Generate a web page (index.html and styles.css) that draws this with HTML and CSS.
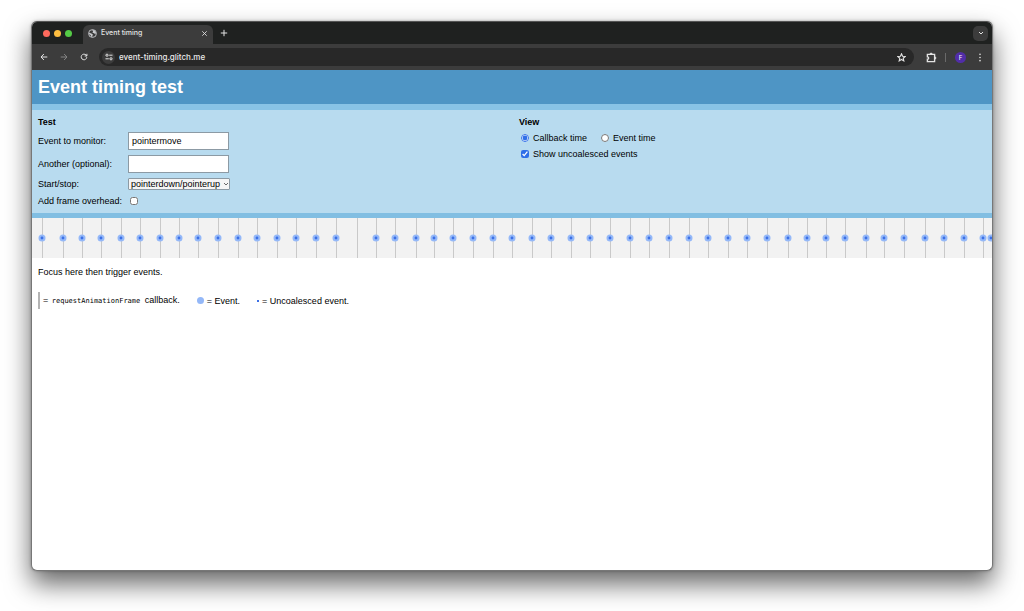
FILE: index.html
```html
<!DOCTYPE html>
<html lang="en">
<head>
<meta charset="utf-8">
<title>Event timing</title>
<link rel="stylesheet" href="styles.css">
</head>
<body>
<div class="window">
  <div class="tabstrip">
    <div class="lights"><span class="light red"></span><span class="light yellow"></span><span class="light green"></span></div>
    <div class="tab">
      <svg class="globe" viewBox="0 0 16 16" aria-hidden="true"><circle cx="8" cy="8" r="7" fill="#3c3c3c" stroke="#c8cacd" stroke-width="1.6"/><path d="M1.500 6.500 5 7.500 8.500 9.500 7.500 14.500 5 13 5 11 2 9ZM7 1.500 12 2.500 14.500 7 12.500 9.500 11 7.500 8 6.500 9 4Z" fill="#c8cacd"/></svg>
      <span class="tab-title">Event timing</span>
      <button class="icon-btn close" aria-label="Close tab"><svg viewBox="0 0 8 8"><path d="M1.500 1.500l5 5M6.500 1.500l-5 5"/></svg></button>
    </div>
    <button class="icon-btn new-tab" aria-label="New tab"><svg viewBox="0 0 8 8"><path d="M4 .8v6.400M.8 4h6.400"/></svg></button>
    <button class="icon-btn tab-search" aria-label="Search tabs"><svg viewBox="0 0 8 8"><path d="M2 3l2 2 2-2"/></svg></button>
  </div>
  <div class="toolbar">
    <button class="icon-btn" aria-label="Back"><svg viewBox="0 0 8 8"><path d="M7.300 4H1M3.900 1L1 4l2.900 3"/></svg></button>
    <button class="icon-btn dim" aria-label="Forward"><svg viewBox="0 0 8 8"><path d="M.7 4H7M4.100 1L7 4 4.100 7"/></svg></button>
    <button class="icon-btn" aria-label="Reload"><svg viewBox="0 0 8 8"><path d="M6.800 4.200A2.800 2.800 0 1 1 6 2L6.800 2.900M6.900.8V3H4.700"/></svg></button>
    <div class="address">
      <button class="site-info" aria-label="Site information"><svg viewBox="0 0 8 8"><path d="M4.200 2.200H7.500M.5 5.800H3.800"/><circle cx="2" cy="2.200" r="1.100"/><circle cx="6" cy="5.800" r="1.100"/></svg></button>
      <input class="url" type="text" aria-label="Address" value="event-timing.glitch.me">
      <button class="icon-btn star" aria-label="Bookmark"><svg viewBox="0 0 16 16"><path d="M8 1.500l1.900 4.300 4.700.5-3.500 3.100 1 4.600L8 11.600 3.900 14l1-4.600L1.400 6.300l4.700-.5Z"/></svg></button>
    </div>
    <button class="icon-btn puzzle" aria-label="Extensions"><svg viewBox="0 0 16 16"><path d="M2 3.500H12.500V14H2V10.500C4.500 10.500 4.500 7 2 7Z"/><path class="knob" d="M5.500 3.500a1.900 1.900 0 0 1 3.800 0ZM12.500 6.800a1.900 1.900 0 0 1 0 3.800Z"/></svg></button>
    <span class="divider"></span>
    <button class="avatar" aria-label="Profile">F</button>
    <button class="icon-btn menu" aria-label="Menu"><svg viewBox="0 0 8 10"><circle cx="4" cy="1.500" r=".9"/><circle cx="4" cy="5" r=".9"/><circle cx="4" cy="8.500" r=".9"/></svg></button>
  </div>
  <main class="page">
    <header class="header"><h1>Event timing test</h1></header>
    <form class="panel">
      <section>
        <h2>Test</h2>
        <div class="fields">
          <label for="ev1">Event to monitor:</label><input class="text" id="ev1" type="text" value="pointermove">
          <label for="ev2">Another (optional):</label><input class="text" id="ev2" type="text">
          <label for="startstop">Start/stop:</label>
          <div class="select-wrap">
            <select id="startstop"><option>pointerdown/pointerup</option></select>
            <svg class="chevron" viewBox="0 0 6 6" aria-hidden="true"><path d="M1 2l2 2 2-2"/></svg>
          </div>
          <label for="overhead">Add frame overhead:</label><input class="check overhead" id="overhead" type="checkbox">
        </div>
      </section>
      <section>
        <h2>View</h2>
        <div class="options">
          <label><input class="radio" type="radio" name="time" checked>Callback time</label>
          <label><input class="radio" type="radio" name="time">Event time</label>
        </div>
        <div class="options">
          <label><input class="check" type="checkbox" checked>Show uncoalesced events</label>
        </div>
      </section>
    </form>
    <svg class="timeline" id="timeline" role="img" aria-label="Event timeline"></svg>
    <div class="notes" tabindex="0">
      <p>Focus here then trigger events.</p>
      <ul class="legend">
        <li><span class="key-frame"></span><span>= <code>requestAnimationFrame</code> callback.</span></li>
        <li><span class="key-event"></span><span>= Event.</span></li>
        <li><span class="key-raw"></span><span>= Uncoalesced event.</span></li>
      </ul>
    </div>
  </main>
</div>
<script src="timeline.js"></script>
</body>
</html>
```
FILE: styles.css
```css
* { box-sizing: border-box; }
body {
  margin: 0;
  padding: 21px 31px 40px;
  min-height: 100vh;
  display: flex;
  background: #fff;
  color: #000;
  font: 9px/12px "Liberation Sans", Arial, sans-serif;
}
button, input, select { margin: 0; font: inherit; color: inherit; }
button { border: 0; padding: 0; background: none; }
h1, h2, p, ul { margin: 0; padding: 0; }

.window {
  flex: 1;
  min-width: 0;
  display: flex;
  flex-direction: column;
  border: 1px solid #777;
  border-top-color: #555;
  border-radius: 6px;
  overflow: hidden;
  background: #fff;
  box-shadow: 0 13px 26px rgba(0, 0, 0, .6), 0 0 3px rgba(0, 0, 0, .3);
}

.tabstrip { display: flex; align-items: center; height: 22px; background: #1f2120; }
.lights { display: flex; gap: 4px; padding: 0 11px 0 11px; }
.light { width: 7px; height: 7px; border-radius: 50%; }
.red { background: #fe6a5d; }
.yellow { background: #febe40; }
.green { background: #55cb46; }
.tab {
  align-self: flex-end;
  display: flex;
  align-items: center;
  gap: 4px;
  width: 130px;
  height: 19px;
  padding: 0 5px 3px;
  border-radius: 6px 6px 0 0;
  background: #3c3c3c;
  color: #e3e3e3;
  font: 500 7px/10px Inter, sans-serif;
}
.tab-title { flex: 1; }
.globe { width: 9px; height: 9px; }
.icon-btn { display: flex; align-items: center; justify-content: center; }
.icon-btn svg { width: 8px; height: 8px; fill: none; stroke: #e3e3e3; stroke-width: 1; }
.close { width: 8px; }
.close svg { width: 7px; height: 7px; }
.new-tab { margin-left: 7px; }
.tab-search { width: 15px; height: 15px; margin: 0 4px 0 auto; border-radius: 5px; background: #3c3c3c; }

.toolbar { display: flex; align-items: center; gap: 12px; height: 26px; padding: 0 8px; background: #3c3c3c; }
.dim svg { stroke: #858585; }
.address {
  flex: 1;
  display: flex;
  align-items: center;
  height: 18px;
  margin: 0 0 0 -1px;
  padding: 0 8px 0 3px;
  border-radius: 9px;
  background: #282828;
}
.site-info { display: flex; align-items: center; justify-content: center; width: 13px; height: 13px; border-radius: 50%; background: #3c3c3c; }
.site-info svg { width: 8px; height: 8px; fill: none; stroke: #e3e3e3; stroke-width: 1; }
.url { flex: 1; min-width: 0; border: 0; padding: 0 4px; background: none; color: #e9e9e9; font: 500 8px/12px Inter, sans-serif; }
.star svg { width: 9px; height: 9px; stroke-width: 2; }
.puzzle svg { width: 11px; height: 11px; stroke-width: 2; }
.puzzle .knob { fill: #e3e3e3; stroke-width: 1; }
.divider { width: 1px; height: 9px; background: #6a6a6a; margin-left: -4px; }
.avatar { width: 11px; height: 11px; margin-left: -3px; border-radius: 50%; background: #512da8; color: #fff; font: 6px/11px Inter, sans-serif; text-align: center; }
.menu { margin-left: -2px; }
.menu svg { width: 8px; height: 9px; fill: #e3e3e3; stroke: none; }

.header { height: 40px; padding: 5px 6px; border-bottom: 6px solid #88c3e6; background: #4e95c5; }
h1 { color: #fff; font-size: 18px; line-height: 24px; }
.panel { display: grid; grid-template-columns: 1fr 1fr; column-gap: 14px; padding: 6px; border-bottom: 5px solid #81bee2; background: #b8dbef; }
h2 { font-size: 9px; line-height: 12px; margin-bottom: 4px; }
.fields { display: grid; grid-template-columns: 84px 102px; grid-template-rows: 18px 18px 12px 12px; gap: 5px 6px; align-items: center; }
.text { width: 101px; height: 18px; border: 1px solid #8c9aa4; padding: 0 3px; background: #fff; }
.fields label { white-space: nowrap; }
.select-wrap { position: relative; height: 12px; }
select {
  display: block;
  width: 100%;
  height: 12px;
  padding: 0 2px;
  border: 1px solid #8c9aa4;
  border-radius: 1px;
  background: #f5f5f5;
  line-height: 10px;
  appearance: none;
}
.chevron { position: absolute; right: 1px; top: 3px; width: 6px; height: 6px; fill: none; stroke: #444; stroke-width: .8; pointer-events: none; }
.check, .radio { width: 8px; height: 8px; accent-color: #2f6fe8; }
.overhead { margin-left: 2px; }
.options { display: flex; gap: 14px; height: 16px; margin-left: 2px; }
.options label { display: flex; align-items: center; gap: 4px; height: 11px; }

.timeline { display: block; width: 100%; height: 40px; background: #f2f2f2; }
.timeline line { stroke: #c9c9c9; stroke-width: 1; }
.timeline .event { fill: #94b8f8; }
.timeline .raw { fill: #3c70e6; }

.notes { padding: 8px 6px; outline: 0; }
.legend { display: flex; gap: 17px; margin-top: 14px; list-style: none; }
.legend li { display: flex; align-items: center; gap: 3px; height: 17px; }
.legend code { margin: 0 2px 0 1px; font: 7px/12px "DejaVu Sans Mono", monospace; }
.key-frame { width: 2px; height: 17px; background: #b4b4b4; }
.key-event { width: 7px; height: 7px; border-radius: 50%; background: #94b8f8; }
.key-raw { width: 2px; height: 2px; background: #3c70e6; }
```
FILE: timeline.js
```js
const frames = [10, 31, 50, 69, 89, 108, 128, 147, 166, 186, 206, 225, 245, 264, 284, 304, 325,
  344, 363, 384, 402, 421, 441, 461, 480, 500, 519, 539, 558, 578, 598, 617, 637, 657, 676, 696,
  715, 735, 756, 775, 794, 813, 834, 852, 872, 893, 912, 932, 951];
const events = frames.filter(x => x !== 325).concat(959);

const timeline = document.getElementById('timeline');
const draw = (name, attrs) => {
  const el = document.createElementNS('http://www.w3.org/2000/svg', name);
  for (const key in attrs) el.setAttribute(key, attrs[key]);
  timeline.appendChild(el);
};

for (const x of frames) draw('line', { x1: x + .5, x2: x + .5, y1: 0, y2: 40 });
for (const x of events) {
  draw('circle', { class: 'event', cx: x, cy: 20, r: 3.5 });
  draw('circle', { class: 'raw', cx: x, cy: 20, r: 1.4 });
}
```
